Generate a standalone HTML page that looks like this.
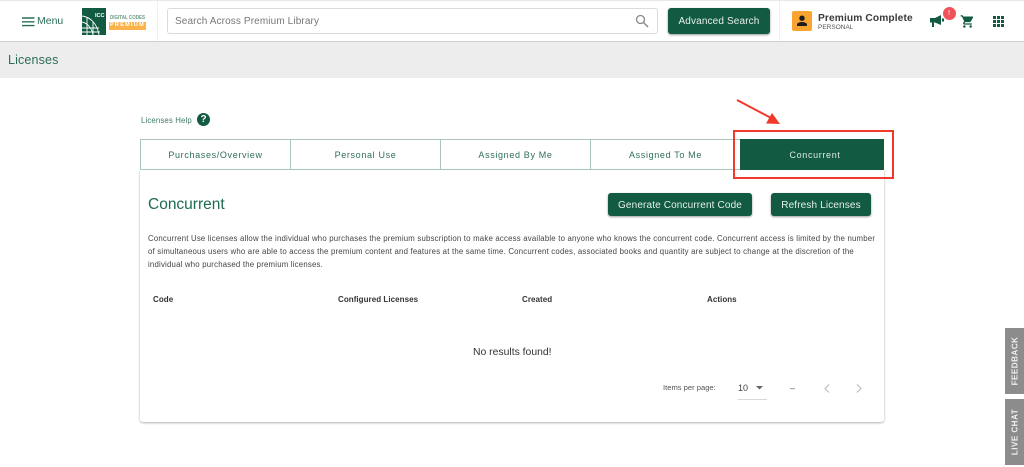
<!DOCTYPE html>
<html><head><meta charset="utf-8"><style>
*{box-sizing:border-box}
html,body{margin:0;padding:0;background:#fff}
body{width:1024px;height:467px;overflow:hidden;position:relative;font-family:"Liberation Sans",sans-serif;color:#333}
.a{position:absolute;white-space:nowrap}
#w{position:absolute;left:0;top:0;width:1024px;height:467px;filter:blur(.35px)}
.tab{position:absolute;top:139px;height:31px;line-height:31px;text-align:center;font-size:9px;letter-spacing:.65px;color:#2f6f58;border:1px solid #a9c6bd;border-right:0;width:150px}
.btn{position:absolute;background:#125a42;color:#e6efeb;border-radius:3px;text-align:center;box-shadow:0 1px 2px rgba(0,0,0,.4);font-size:10px;letter-spacing:.14px}
.side{position:absolute;left:1005px;width:19px;background:#8c8c8c;color:#eee;font-size:8.2px;letter-spacing:.4px;font-weight:bold}
.side span{position:absolute;left:50%;top:50%;transform:translate(-50%,-50%) rotate(-90deg);white-space:nowrap}
.th{position:absolute;top:295px;font-size:8px;font-weight:bold;color:#333;letter-spacing:.05px;white-space:nowrap}
</style></head><body><div id="w">
<div class="a" style="left:0;top:0;width:1024px;height:1px;background:#e8e8e8"></div>
<div class="a" style="left:0;top:41px;width:1024px;height:37px;background:#ededed;border-top:1.5px solid #cfcfcf"></div>
<div class="a" style="left:157px;top:1px;width:1px;height:40px;background:#f0f0f0"></div>
<div class="a" style="left:779px;top:1px;width:1px;height:40px;background:#f0f0f0"></div>

<svg class="a" style="left:22px;top:17px" width="13" height="10"><path d="M0 1h12.5M0 4.8h12.5M0 8.6h12.5" stroke="#2b6e56" stroke-width="1.4"/></svg>
<div class="a" style="left:37px;top:15px;font-size:10.5px;color:#2b6e56;line-height:13px">Menu</div>

<svg class="a" style="left:82px;top:8px" width="25" height="27" viewBox="0 0 25 27">
<rect width="24" height="27" fill="#125a42"/>
<path d="M0 8C8 9 15 15 17 27M0 14C5 15 10 20 11 27M5 9.500V27M0 20H17M0 24H18M11 14V27" fill="none" stroke="#fff" stroke-width=".9"/>
<text x="13" y="9" font-size="5.5" font-weight="bold" fill="#fff" font-family="Liberation Sans">ICC</text>
</svg>
<div class="a" style="left:110px;top:15px;font-size:5.8px;font-weight:bold;color:#6b9a80;line-height:6px;transform:scaleX(.78);transform-origin:0 0">DIGITAL CODES</div>
<div class="a" style="left:109px;top:22px;width:37px;height:7.500px;background:#f9b24c;color:#fff;font-size:5.5px;font-weight:bold;line-height:7.500px;letter-spacing:1.300px;text-align:center">PREMIUM</div>

<div class="a" style="left:167px;top:8px;width:491px;height:26px;border:1px solid #dcdcdc;border-radius:3px;background:#fff"></div>
<div class="a" style="left:175px;top:15px;font-size:10px;color:#777;letter-spacing:.12px;line-height:13px">Search Across Premium Library</div>
<svg class="a" style="left:635px;top:14px" width="14" height="14"><circle cx="5.500" cy="5.500" r="4" fill="none" stroke="#888" stroke-width="1.300"/><path d="M8.500 8.500L13 13" stroke="#888" stroke-width="1.500"/></svg>
<div class="btn" style="left:668px;top:8px;width:102px;height:26px;line-height:27px">Advanced Search</div>

<div class="a" style="left:792px;top:11px;width:20px;height:20px;background:#f9a431;border-radius:2px"></div>
<svg class="a" style="left:796px;top:15px" width="12" height="12"><circle cx="6" cy="3.200" r="2.700" fill="#1d1d1d"/><path d="M1 11V9.600C1 7.800 4 7 6 7s5 .8 5 2.600V11z" fill="#1d1d1d"/></svg>
<div class="a" style="left:818px;top:12px;font-size:10.200px;font-weight:bold;color:#3a3a3a;line-height:13px;letter-spacing:.12px">Premium Complete</div>
<div class="a" style="left:818px;top:23.500px;font-size:6.500px;color:#555;line-height:8px">PERSONAL</div>

<svg class="a" style="left:930px;top:15px" width="15" height="13" viewBox="0 0 15 13"><path d="M0 3H5L11 0V10L5 7.500H4V12H2V7.500H0z" fill="#125a42"/><rect x="12" y="3.500" width="2" height="3" fill="#125a42"/></svg>
<div class="a" style="left:942.500px;top:6.500px;width:13px;height:13px;border-radius:50%;background:#f0525a;color:#fff;font-size:7px;line-height:13px;text-align:center">!</div>
<svg class="a" style="left:960px;top:14px" width="15" height="15" viewBox="0 0 24 24"><path fill="#125a42" d="M7 18c-1.100 0-2 .9-2 2s.9 2 2 2 2-.9 2-2-.9-2-2-2zM1 2v2h2l3.600 7.600L5.200 14c-.1.3-.2.6-.2 1 0 1.100.9 2 2 2h12v-2H7.400c-.1 0-.2-.1-.2-.2v-.1l.9-1.700h7.400c.8 0 1.400-.4 1.800-1l3.600-6.500c.1-.2.1-.3.1-.5 0-.6-.4-1-1-1H5.200L4.300 2H1zm16 16c-1.100 0-2 .9-2 2s.9 2 2 2 2-.9 2-2-.9-2-2-2z"/></svg>
<svg class="a" style="left:993px;top:16px" width="11" height="11" fill="#125a42"><rect width="3" height="3"/><rect x="4" width="3" height="3"/><rect x="8" width="3" height="3"/><rect y="4" width="3" height="3"/><rect x="4" y="4" width="3" height="3"/><rect x="8" y="4" width="3" height="3"/><rect y="8" width="3" height="3"/><rect x="4" y="8" width="3" height="3"/><rect x="8" y="8" width="3" height="3"/></svg>

<div class="a" style="left:8px;top:52px;font-size:12.500px;color:#2b6e56;line-height:16px;letter-spacing:.15px">Licenses</div>

<div class="a" style="left:141px;top:115.500px;font-size:7.800px;color:#3f7b66;line-height:10px;letter-spacing:.14px">Licenses Help</div>
<div class="a" style="left:197px;top:113px;width:13px;height:13px;border-radius:50%;background:#125a42;color:#fff;font-size:10px;font-weight:bold;line-height:13px;text-align:center">?</div>

<div class="a" style="left:140px;top:170px;width:744px;height:252px;background:#fff;border-radius:0 0 3px 3px;box-shadow:0 1px 2px rgba(0,0,0,.3),0 0 2px rgba(0,0,0,.05)"></div>

<div class="tab" style="left:140px">Purchases/Overview</div>
<div class="tab" style="left:290px">Personal Use</div>
<div class="tab" style="left:440px">Assigned By Me</div>
<div class="tab" style="left:590px">Assigned To Me</div>
<div class="tab" style="left:740px;width:144px;background:#125a42;color:#dfe9e5;border:0;line-height:32px;padding-left:6px">Concurrent</div>

<div class="a" style="left:733px;top:130px;width:161px;height:49px;border:2px solid #f0392b"></div>
<svg class="a" style="left:730px;top:95px" width="56" height="35"><path d="M7 5L43 24" stroke="#f0392b" stroke-width="2"/><path d="M50 29L36 28.500L42 18z" fill="#f0392b"/></svg>

<div class="a" style="left:148px;top:194.500px;font-size:15.500px;color:#1f6a50;line-height:19px">Concurrent</div>
<div class="btn" style="left:608px;top:193px;width:144px;height:23px;line-height:25px">Generate Concurrent Code</div>
<div class="btn" style="left:771px;top:193px;width:100px;height:23px;line-height:25px">Refresh Licenses</div>

<div class="a" style="left:148px;top:232px;font-size:7.800px;line-height:13px;color:#444;letter-spacing:.205px">Concurrent Use licenses allow the individual who purchases the premium subscription to make access available to anyone who knows the concurrent code. Concurrent access is limited by the number<br>of simultaneous users who are able to access the premium content and features at the same time. Concurrent codes, associated books and quantity are subject to change at the discretion of the<br>individual who purchased the premium licenses.</div>

<div class="th" style="left:153px">Code</div>
<div class="th" style="left:338px">Configured Licenses</div>
<div class="th" style="left:522px">Created</div>
<div class="th" style="left:707px">Actions</div>

<div class="a" style="left:473px;top:346px;font-size:10.400px;color:#333;line-height:13px">No results found!</div>

<div class="a" style="left:663px;top:383px;font-size:7.600px;color:#555;line-height:10px">Items per page:</div>
<div class="a" style="left:738px;top:382px;font-size:9px;color:#444;line-height:12px">10</div>
<svg class="a" style="left:756px;top:386px" width="8" height="4"><path d="M0 0H7L3.500 3.500z" fill="#666"/></svg>
<div class="a" style="left:738px;top:399px;width:29px;height:1px;background:#d8d8d8"></div>
<div class="a" style="left:790px;top:382px;font-size:9px;color:#666;line-height:12px">–</div>
<svg class="a" style="left:824px;top:384px" width="6" height="9"><path d="M5 .5L1 4.500L5 8.500" fill="none" stroke="#bbb" stroke-width="1.100"/></svg>
<svg class="a" style="left:856px;top:384px" width="6" height="9"><path d="M1 .5L5 4.500L1 8.500" fill="none" stroke="#bbb" stroke-width="1.100"/></svg>

<div class="side" style="top:328px;height:66px"><span>FEEDBACK</span></div>
<div class="side" style="top:399px;height:66px"><span>LIVE CHAT</span></div>
</div></body></html>
